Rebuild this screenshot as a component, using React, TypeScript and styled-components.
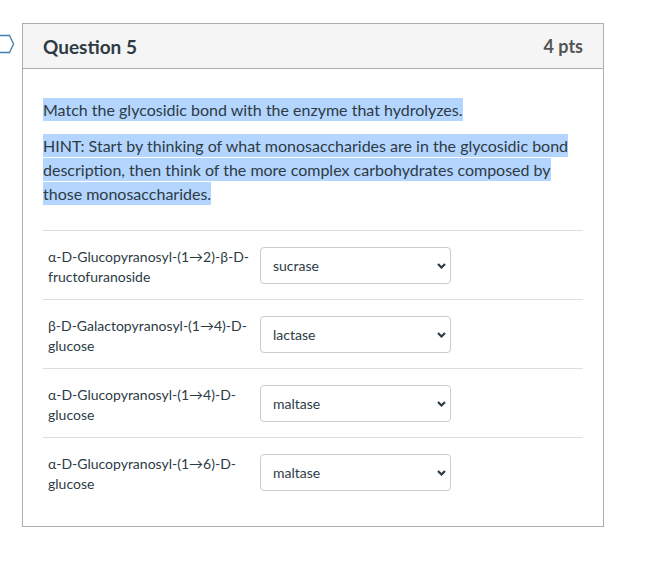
import React from "react";
import styled, { createGlobalStyle } from "styled-components";

const GlobalStyle = createGlobalStyle`
  html, body { margin: 0; padding: 0; background: #ffffff; }
  body { font-family: Lato, "Open Sans", "Liberation Sans", sans-serif; color: #2d3b45; }
`;

const Page = styled.div`
  display: flex;
  align-items: flex-start;
  padding-top: 23px;
  width: 663px;
  height: 577px;
  box-sizing: border-box;
`;

const TabColumn = styled.div`
  width: 22px;
  flex: none;
  padding-top: 11px;
  display: flex;
`;

const Card = styled.div`
  width: 582px;
  box-sizing: border-box;
  border: 1px solid #adadad;
  background: #ffffff;
`;

const Header = styled.div`
  height: 44px;
  border-bottom: 1px solid #adadad;
  background: #f5f5f5;
  display: flex;
  align-items: center;
  justify-content: space-between;
  padding: 0 20px;
`;

const Title = styled.h2`
  margin: 0;
  font-size: 19px;
  font-weight: 700;
  color: #2d3b45;
`;

const Points = styled.div`
  font-size: 18px;
  font-weight: 700;
  color: #555555;
`;

const Body = styled.div`
  padding: 29px 20px 20px;
`;

const Para = styled.p`
  margin: 0 0 12px;
  font-size: 16px;
  line-height: 24px;
  &:last-of-type { margin-bottom: 24px; }
`;

const Mark = styled.span`
  background: #b4d5fe;
  padding: 2.4px 0;
  box-decoration-break: clone;
  -webkit-box-decoration-break: clone;
`;

const Row = styled.div`
  display: flex;
  align-items: flex-start;
  gap: 10px;
  border-top: 1px solid #dcdfe2;
  padding: 16px 5px 12px;
`;

const Label = styled.div`
  width: 202px;
  flex: none;
  font-size: 14px;
  line-height: 20px;
  color: #2d3b45;
`;

const SelectWrap = styled.div`
  position: relative;
  width: 191px;
  height: 37px;
`;

const Select = styled.select`
  appearance: none;
  -webkit-appearance: none;
  width: 100%;
  height: 100%;
  box-sizing: border-box;
  border: 1px solid #c7cdd1;
  border-radius: 4px;
  background: #ffffff;
  padding: 0 24px 0 12px;
  font-family: Lato, "Open Sans", "Liberation Sans", sans-serif;
  font-size: 14px;
  color: #2d3b45;
`;

const Chevron = styled.svg`
  position: absolute;
  right: 5px;
  top: 16px;
  pointer-events: none;
`;

const rows = [
  { label: "α-D-Glucopyranosyl-(1→2)-β-D-fructofuranoside", value: "sucrase" },
  { label: "β-D-Galactopyranosyl-(1→4)-D-glucose", value: "lactase" },
  { label: "α-D-Glucopyranosyl-(1→4)-D-glucose", value: "maltase" },
  { label: "α-D-Glucopyranosyl-(1→6)-D-glucose", value: "maltase" },
];

const options = ["sucrase", "lactase", "maltase"];

export default function App() {
  return (
    <>
      <GlobalStyle />
      <Page>
        <TabColumn>
          <svg width="15" height="20" viewBox="0 0 15 20">
            <path d="M-2 1.5 H9.5 L13.5 10 L9.5 18.5 H-2" fill="none" stroke="#3d7fb0" strokeWidth="1.3" strokeLinejoin="miter" />
          </svg>
        </TabColumn>
        <Card>
          <Header>
            <Title>Question 5</Title>
            <Points>4 pts</Points>
          </Header>
          <Body>
            <Para>
              <Mark>Match the glycosidic bond with the enzyme that hydrolyzes.</Mark>
            </Para>
            <Para>
              <Mark>
                HINT: Start by thinking of what monosaccharides are in the glycosidic bond description, then think of the more complex carbohydrates composed by those monosaccharides.
              </Mark>
            </Para>
            {rows.map((r, i) => (
              <Row key={i}>
                <Label>{r.label}</Label>
                <SelectWrap>
                  <Select defaultValue={r.value}>
                    {options.map((o) => (
                      <option key={o} value={o}>{o}</option>
                    ))}
                  </Select>
                  <Chevron width="9" height="6" viewBox="0 0 9 6">
                    <path d="M1 1 L4.5 4.5 L8 1" fill="none" stroke="#2d3b45" strokeWidth="2.2" />
                  </Chevron>
                </SelectWrap>
              </Row>
            ))}
          </Body>
        </Card>
      </Page>
    </>
  );
}
